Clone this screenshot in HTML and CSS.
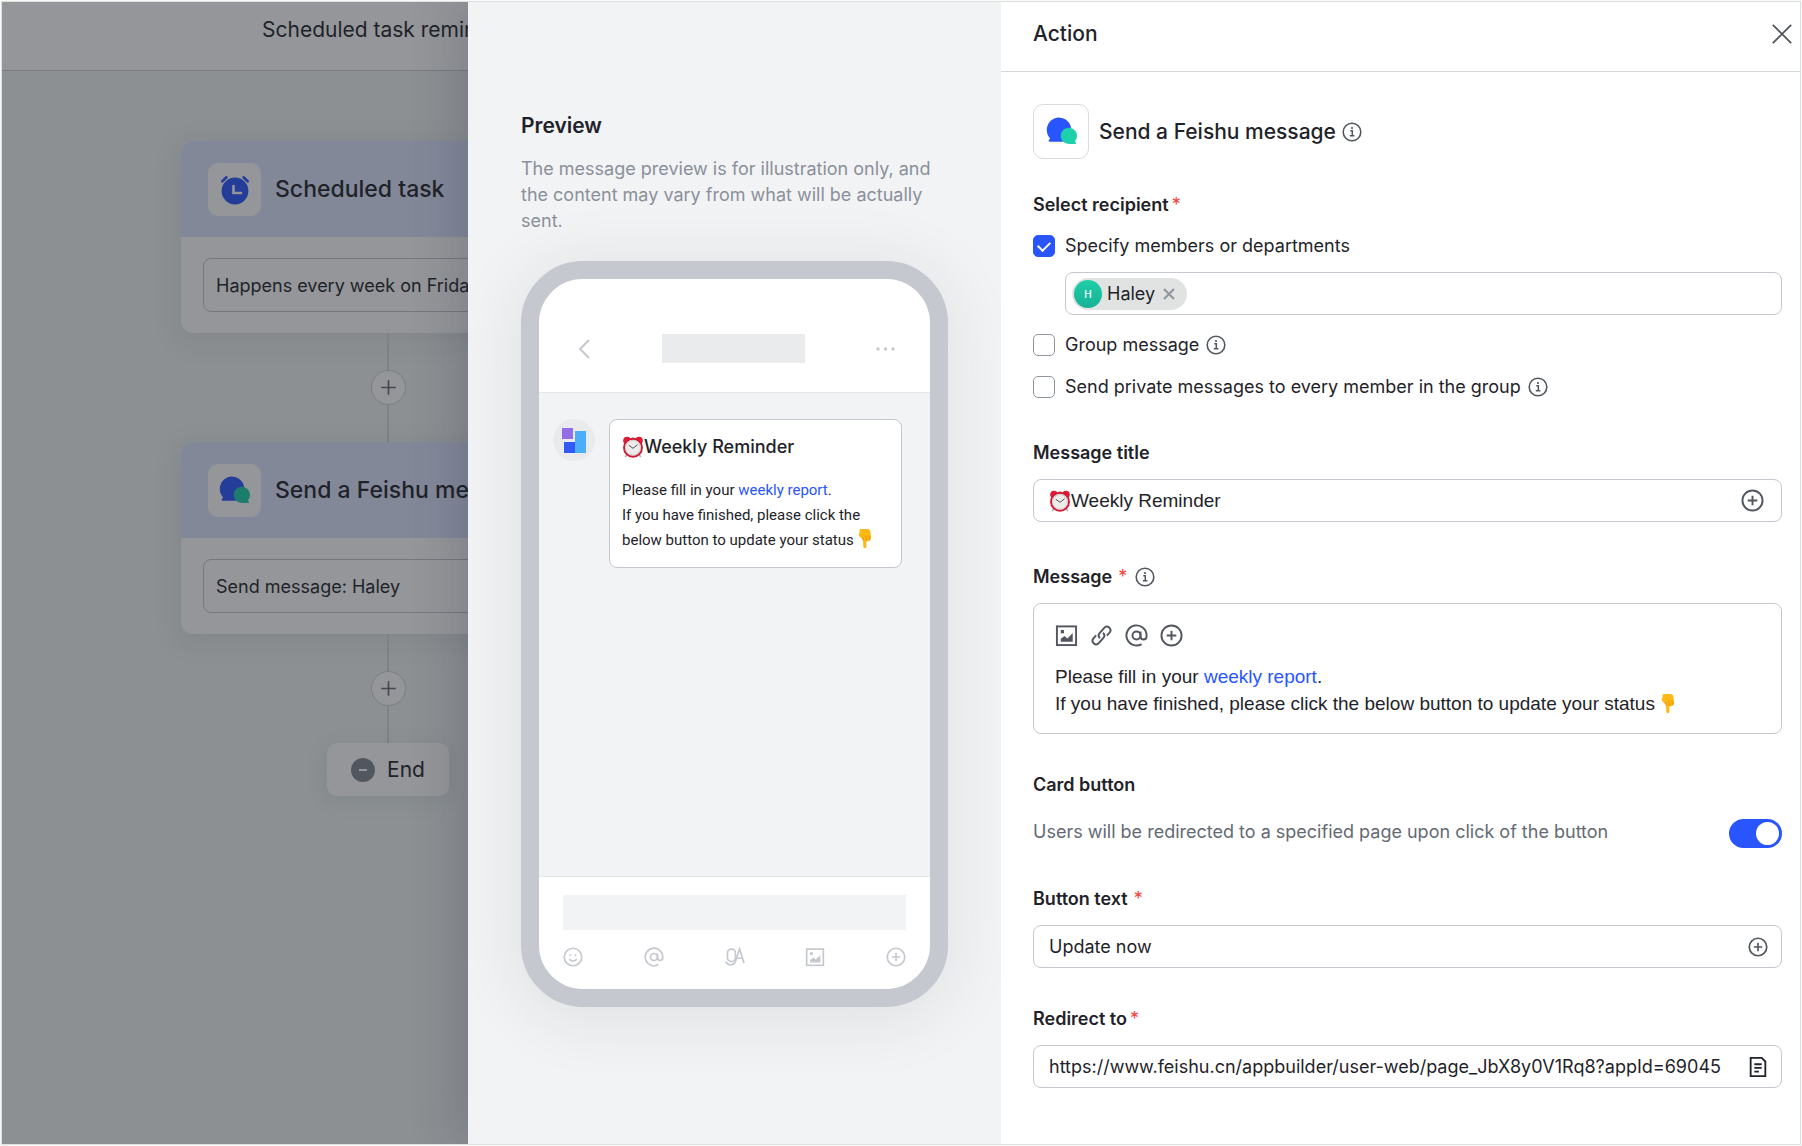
FILE: index.html
```html
<!DOCTYPE html>
<html lang="en">
<head>
<meta charset="utf-8">
<meta name="viewport" content="width=device-width, initial-scale=1">
<title>Scheduled task reminder</title>
<link rel="stylesheet" href="styles.css">
</head>
<body>
<svg class="sprite" aria-hidden="true">
  <symbol id="i-plus" viewBox="0 0 34 34"><path d="M17 9.500v15M9.500 17h15" stroke-width="1.700"/></symbol>
  <symbol id="i-plus-circle" viewBox="0 0 24 24"><circle cx="12" cy="12" r="10.500"/><path d="M12 7v10M7 12h10"/></symbol>
  <symbol id="i-info" viewBox="0 0 20 20"><circle cx="10" cy="10" r="8.800" stroke-width="1.600"/><path d="M8.300 8.800H10.300V13.800M7.800 13.800h4.600" stroke-width="1.500"/><circle cx="10" cy="6" r="1.100" fill="currentColor" stroke="none"/></symbol>
  <symbol id="i-close" viewBox="0 0 24 24"><path d="M2 2l20 20M22 2L2 22"/></symbol>
  <symbol id="i-at" viewBox="0 0 24 24"><circle cx="12" cy="12" r="4.200"/><path d="M16.200 7.800v5.200a3.100 3.100 0 0 0 6.300 0v-1a10.500 10.500 0 1 0-5.200 9"/></symbol>
  <symbol id="i-image" viewBox="0 0 24 24"><rect x="2" y="2.500" width="20" height="19.500"/><path d="M6 18.500v-3l4-3 3 2.500 5.500-5.500v9z" fill="currentColor" stroke="none"/><rect x="6" y="6.300" width="3.400" height="3.400" fill="currentColor" stroke="none"/></symbol>
  <symbol id="i-link" viewBox="0 0 24 24"><path d="M10.400 14.800c-1.700-1.500-1.800-3.600-.4-5.300l4.600-5.300c1.500-1.700 3.800-1.900 5.400-.5 1.700 1.500 1.800 3.600.4 5.300l-2.800 3.200M13.600 9.200c1.700 1.500 1.800 3.600.4 5.300l-4.600 5.300c-1.500 1.700-3.800 1.900-5.400.5-1.700-1.500-1.800-3.600-.4-5.300l2.800-3.200"/></symbol>
  <symbol id="i-smile" viewBox="0 0 24 24"><circle cx="12" cy="12" r="10.500"/><path d="M9 8.600v2.600M15 8.600v2.600M7.500 14.500c2 3 7 3 9 0"/></symbol>
  <symbol id="i-voice" viewBox="0 0 24 24"><rect x="3" y="2.500" width="9.500" height="15" rx="4.600"/><path d="M1 17.500c2 5 9.500 5 11.500 0L17.500 2.500l5.300 17M14.500 13.500h6"/></symbol>
  <symbol id="i-doc" viewBox="0 0 20 24"><path d="M2 2h12l4 4v16H2zM6 9h8M6 13h8M6 17h5"/></symbol>
  <symbol id="i-chat" viewBox="0 0 53 53"><path d="M14.800 36.700c-1 0-1.500-.9-.9-1.700l1.200-1.600A12.300 12.300 0 1 1 36.300 24.500c0 5-3 12.200-9 12.200z" fill="#2955ff"/><path d="M39.800 39H34a8.100 8.100 0 1 1 6-2.800l.8 1.200c.5.800 0 1.600-1 1.600z" fill="#1bd0ab"/></symbol>
  <symbol id="i-clock" viewBox="0 0 53 53"><circle cx="27" cy="28" r="13.400" fill="#2955ff"/><path d="M14.300 18.300l4.200-4M39.700 18.300l-4.200-4" stroke="#2955ff" stroke-width="2.600" stroke-linecap="round"/><path d="M25.500 23v7H33" stroke="#fff" stroke-width="2.600" stroke-linecap="round"/></symbol>
  <symbol id="e-alarm" viewBox="0 0 22 22"><path d="M5 18.500L3.200 21M17 18.500l1.800 2.500" stroke="#aaa" stroke-width="1.400"/><circle cx="5" cy="4.500" r="3.800" fill="#df1b36"/><circle cx="17" cy="4.500" r="3.800" fill="#df1b36"/><path d="M9.500 1.500h3v2h-3z" fill="#999"/><circle cx="11" cy="11.800" r="9" fill="#e3e3e3" stroke="#d11a34" stroke-width="1.900"/><circle cx="11" cy="11.800" r="7.400" fill="#ececea" stroke="#bbb" stroke-width=".6"/><path d="M6.800 9.300l4.200 3 4.600-3.600" stroke="#555" stroke-width="1"/></symbol>
  <symbol id="e-down" viewBox="0 0 16 22"><path d="M3 .8h8c2 0 3 1.200 3.300 3l.7 5.700c.3 2.200-.6 3.800-2.300 3.800-1 .9-2 1-2.700.4v5.800c0 2.400-3.200 2.400-3.300 0l-.2-7L2.800 8.800C1 7 2.100 5.300 2.700 4.500z" fill="#fdb913"/><path d="M8.200 8.500c1.200-.4 1.800.2 1.800 1.300v3.700M12.400 7.800c.8.900 1 3 .6 5.200M6.500 9.500v4" stroke="#e58a06" stroke-width=".8"/></symbol>
</svg>

<div class="app">
  <section class="flow" aria-label="Workflow">
    <header class="flow-header">Scheduled task reminder</header>
    <div class="flow-canvas">
      <article class="node">
        <h2 class="node-head"><span class="node-icon"><svg class="tile"><use href="#i-clock"/></svg></span>Scheduled task</h2>
        <div class="node-body"><p class="node-field">Happens every week on Friday</p></div>
      </article>
      <span class="wire"></span>
      <button class="add" aria-label="Add step"><svg class="icon"><use href="#i-plus"/></svg></button>
      <span class="wire"></span>
      <article class="node">
        <h2 class="node-head"><span class="node-icon"><svg class="tile"><use href="#i-chat"/></svg></span>Send a Feishu message</h2>
        <div class="node-body"><p class="node-field">Send message: Haley</p></div>
      </article>
      <span class="wire"></span>
      <button class="add" aria-label="Add step"><svg class="icon"><use href="#i-plus"/></svg></button>
      <span class="wire"></span>
      <div class="end"><span class="end-dot"></span>End</div>
    </div>
    <div class="mask"></div>
  </section>

  <section class="preview">
    <h2 class="preview-title">Preview</h2>
    <p class="preview-note">The message preview is for illustration only, and the content may vary from what will be actually sent.</p>
    <div class="phone">
      <div class="phone-head">
        <svg class="phone-back" viewBox="0 0 12 20"><path d="M11 1L2 10l9 9"/></svg>
        <span class="phone-name"></span>
        <svg class="phone-more" viewBox="0 0 20 4"><circle cx="2" cy="2" r="1.700"/><circle cx="9.500" cy="2" r="1.700"/><circle cx="17" cy="2" r="1.700"/></svg>
      </div>
      <div class="phone-chat">
        <svg class="bot" viewBox="0 0 42 42"><circle cx="21" cy="21" r="21" fill="#e9eaec"/><path d="M9 9h11v11H9z" fill="#936ee8"/><path d="M11 23h11v11H11z" fill="#3259f5"/><path d="M22 12h11v22H22z" fill="#4aaef8"/></svg>
        <div class="bubble">
          <h3 class="bubble-title"><svg class="emoji"><use href="#e-alarm"/></svg>Weekly Reminder</h3>
          <p class="bubble-text">Please fill in your <a href="#report">weekly report</a>.<br>If you have finished, please click the<br>below button to update your status <svg class="hand"><use href="#e-down"/></svg></p>
        </div>
      </div>
      <div class="phone-foot">
        <span class="phone-input"></span>
        <div class="phone-tools">
          <svg class="icon"><use href="#i-smile"/></svg>
          <svg class="icon"><use href="#i-at"/></svg>
          <svg class="icon"><use href="#i-voice"/></svg>
          <svg class="icon"><use href="#i-image"/></svg>
          <svg class="icon"><use href="#i-plus-circle"/></svg>
        </div>
      </div>
    </div>
  </section>

  <section class="action">
    <header class="action-head">
      <h1 class="action-title">Action</h1>
      <button class="plain close" aria-label="Close"><svg class="icon"><use href="#i-close"/></svg></button>
    </header>
    <form class="form">
      <div class="kind">
        <span class="kind-icon"><svg class="tile"><use href="#i-chat"/></svg></span>
        <h2 class="kind-title">Send a Feishu message</h2>
        <svg class="icon info"><use href="#i-info"/></svg>
      </div>

      <h3 class="label label-first">Select recipient<span class="req tight">*</span></h3>
      <label class="check"><input type="checkbox" class="box" checked>Specify members or departments</label>
      <div class="field members">
        <span class="tag"><span class="avatar">H</span>Haley<button type="button" class="plain tag-x" aria-label="Remove Haley"><svg class="icon"><use href="#i-close"/></svg></button></span>
        <input class="input" type="text" aria-label="Members or departments">
      </div>
      <label class="check"><input type="checkbox" class="box">Group message<svg class="icon info"><use href="#i-info"/></svg></label>
      <label class="check"><input type="checkbox" class="box">Send private messages to every member in the group<svg class="icon info"><use href="#i-info"/></svg></label>

      <label class="label wide" for="title">Message title</label>
      <div class="field">
        <svg class="emoji"><use href="#e-alarm"/></svg>
        <input class="input arial" id="title" type="text" value="Weekly Reminder">
        <button type="button" class="plain insert" aria-label="Insert"><svg class="icon"><use href="#i-plus-circle"/></svg></button>
      </div>

      <h3 class="label wide" id="message-label">Message<span class="req">*</span><svg class="icon info"><use href="#i-info"/></svg></h3>
      <div class="editor">
        <div class="toolbar">
          <button type="button" class="plain" aria-label="Image"><svg class="icon"><use href="#i-image"/></svg></button>
          <button type="button" class="plain" aria-label="Link"><svg class="icon"><use href="#i-link"/></svg></button>
          <button type="button" class="plain" aria-label="Mention"><svg class="icon"><use href="#i-at"/></svg></button>
          <button type="button" class="plain" aria-label="Insert"><svg class="icon"><use href="#i-plus-circle"/></svg></button>
        </div>
        <div class="editor-text arial" contenteditable="true" role="textbox" aria-multiline="true" aria-labelledby="message-label">Please fill in your <a href="#report">weekly report</a>.<br>If you have finished, please click the below button to update your status <svg class="hand"><use href="#e-down"/></svg></div>
      </div>

      <label class="label" for="card-button">Card button</label>
      <div class="switch-row">
        <p class="hint">Users will be redirected to a specified page upon click of the button</p>
        <input type="checkbox" role="switch" class="switch" id="card-button" checked>
      </div>

      <label class="label" for="text">Button text<span class="req">*</span></label>
      <div class="field">
        <input class="input" id="text" type="text" value="Update now">
        <button type="button" class="plain pick" aria-label="Insert"><svg class="icon"><use href="#i-plus-circle"/></svg></button>
      </div>

      <label class="label" for="url">Redirect to<span class="req tight">*</span></label>
      <div class="field">
        <input class="input" id="url" type="text" value="https://www.feishu.cn/appbuilder/user-web/page_JbX8y0V1Rq8?appId=69045">
        <button type="button" class="plain pick doc" aria-label="Choose page"><svg class="icon"><use href="#i-doc"/></svg></button>
      </div>
    </form>
  </section>
</div>
</body>
</html>
```
FILE: styles.css
```css
* { box-sizing: border-box; margin: 0; }

body {
  padding: 1px;
  background: #f8faf9;
  color: #1f2329;
  font: 400 18px/26px Inter, "Liberation Sans", sans-serif;
}

a { color: #2955ff; text-decoration: none; }
button, input { font: inherit; color: inherit; }
h1, h2, h3 { font-weight: 500; }

.sprite { position: absolute; width: 0; height: 0; }
svg { fill: none; stroke-width: 2; flex: none; }
.icon { stroke: currentColor; display: block; }
.tile { width: 53px; height: 53px; display: block; }
.plain { border: 0; padding: 0; background: none; color: #51565f; cursor: pointer; }

.app {
  display: grid;
  grid-template-columns: 466fr 533fr 799fr;
  min-height: calc(100vh - 2px);
  border: 1px solid #dfe1e1;
  overflow: hidden;
}

/* Workflow behind the drawer */
.flow {
  position: relative;
  display: flex;
  flex-direction: column;
  min-width: 0;
  overflow: hidden;
  background: #eff3f3;
}
.flow-header {
  height: 69px;
  padding: 15px 0 0 260px;
  border-bottom: 1px solid #c9cdd0;
  background: #fff;
  font-size: 21px;
  white-space: nowrap;
}
.flow-canvas {
  display: flex;
  flex-direction: column;
  align-items: center;
  width: 414px;
  margin: 70px 0 0 179px;
}
.node {
  width: 100%;
  border-radius: 12px;
  overflow: hidden;
  background: #fff;
  box-shadow: 0 6px 24px 8px rgba(31, 35, 41, .06);
}
.node-head {
  display: flex;
  align-items: center;
  gap: 14px;
  height: 96px;
  padding: 0 27px;
  background: #dee5ff;
  font-size: 23px;
  white-space: nowrap;
}
.node-icon { border-radius: 10px; background: #fff; }
.node-body { padding: 21px 22px; }
.node-field {
  height: 54px;
  padding: 0 12px;
  border: 1px solid #c3c6cb;
  border-radius: 8px;
  line-height: 53px;
  white-space: nowrap;
}
.wire { width: 2px; height: 37px; background: #d5d7da; }
.add {
  width: 35px;
  height: 35px;
  padding: 0;
  border: 1px solid #ced1d5;
  border-radius: 50%;
  background: #fff;
  color: #646a73;
}
.add .icon { width: 33px; height: 33px; }
.end {
  display: flex;
  align-items: center;
  justify-content: center;
  gap: 12px;
  width: 122px;
  height: 53px;
  border-radius: 10px;
  background: #fff;
  box-shadow: 0 4px 20px 4px rgba(31, 35, 41, .06);
  font-size: 21px;
}
.end-dot {
  display: grid;
  place-items: center;
  width: 24px;
  height: 24px;
  border-radius: 50%;
  background: #80858f;
}
.end-dot::before { content: ""; width: 8px; height: 2px; background: #fff; }
.mask { position: absolute; inset: 0; background: rgba(31, 35, 41, .48); }

/* Message preview */
.preview {
  z-index: 1;
  padding: 111px 53px 0;
  background: #f2f3f5;
  box-shadow: -8px 0 48px rgba(31, 35, 60, .2);
}
.preview-title { font-size: 21px; font-weight: 600; }
.preview-note { margin: 17px 0 27px; color: #8a9099; }
.phone {
  display: flex;
  flex-direction: column;
  height: 746px;
  border: 18px solid #c5c8ce;
  border-radius: 62px;
  overflow: hidden;
  background: #f2f3f5;
  box-shadow: 0 8px 64px 8px rgba(31, 35, 41, .08);
}
.phone-head {
  display: flex;
  align-items: center;
  justify-content: space-between;
  height: 114px;
  padding: 26px 34px 0 39px;
  border-bottom: 1px solid #e4e6e8;
  background: #fff;
}
.phone-back { width: 12px; height: 20px; stroke: #c5c8ce; }
.phone-more { width: 20px; height: 4px; fill: #c5c8ce; }
.phone-name { width: 143px; height: 29px; background: #eaebed; }
.phone-chat { flex: 1; display: flex; align-items: flex-start; gap: 14px; padding: 26px 28px 0 14px; }
.bot { width: 42px; height: 42px; }
.bubble {
  flex: 1;
  padding: 14px 12px 14px;
  border: 1px solid #c5c8ce;
  border-radius: 8px;
  background: #fff;
}
.bubble-title { display: flex; align-items: center; margin-bottom: 18px; font-size: 18px; }
.bubble-text { font-family: Roboto, "Liberation Sans", sans-serif; font-size: 15px; line-height: 25px; }
.emoji { width: 22px; height: 22px; }
.hand { width: 15px; height: 21px; vertical-align: -4px; }
.phone-foot { padding: 18px 24px 22px; border-top: 1px solid #e4e6e8; background: #fff; }
.phone-input { display: block; height: 35px; margin-bottom: 17px; background: #f2f3f5; }
.phone-tools { display: flex; justify-content: space-between; color: #c5c8ce; }
.phone-tools .icon { width: 20px; height: 20px; }

/* Action settings */
.action { z-index: 2; min-width: 0; background: #fff; }
.action-head {
  display: flex;
  align-items: center;
  justify-content: space-between;
  height: 70px;
  padding: 0 7px 6px 32px;
  border-bottom: 1px solid #d4d6d9;
}
.action-title { font-size: 21px; }
.close .icon { width: 22px; height: 22px; }
.form { padding: 32px 18px 48px 32px; }
.kind { display: flex; align-items: center; gap: 10px; height: 55px; }
.kind-icon {
  display: grid;
  place-items: center;
  width: 56px;
  height: 55px;
  border: 1px solid #d8dbdf;
  border-radius: 10px;
}
.kind-title { font-size: 21px; }
.info { width: 20px; height: 20px; color: #51565f; }
.kind .info { margin-left: -4px; }
.check .info { margin-left: -3px; }
.label { display: flex; align-items: center; height: 28px; margin: 37px 0 12px; font-size: 18px; font-weight: 600; }
.label.wide { margin-top: 41px; }
.label.label-first { margin: 32px 0 16px; }
.req { margin: 0 8px 0 6px; color: #f5413d; font-weight: 400; }
.req.tight { margin-left: 3px; }
.check { display: flex; align-items: center; gap: 10px; height: 22px; margin-top: 20px; }
.label-first + .check { margin-top: 0; }
.box {
  display: grid;
  place-items: center;
  width: 22px;
  height: 22px;
  margin: 0;
  border: 1px solid #8f959e;
  border-radius: 5px;
  appearance: none;
}
.box:checked { border-color: #2955ff; background: #2955ff; }
.box:checked::before {
  content: "";
  width: 10px;
  height: 6px;
  margin-bottom: 3px;
  border: solid #fff;
  border-width: 0 0 2px 2px;
  rotate: -45deg;
}
.field {
  display: flex;
  align-items: center;
  height: 43px;
  padding: 0 15px;
  border: 1px solid #c5c8ce;
  border-radius: 8px;
}
.field.members { margin: 15px 0 -1px 32px; padding: 0 6px; }
.input { flex: 1; min-width: 0; padding: 0; border: 0; outline: 0; background: none; }
.arial { font-family: "Liberation Sans", Arial, sans-serif; font-size: 19px; }
.tag {
  display: flex;
  align-items: center;
  height: 32px;
  padding: 0 12px 0 2px;
  border-radius: 16px;
  background: #e1e3e2;
}
.avatar {
  display: grid;
  place-items: center;
  width: 28px;
  height: 28px;
  margin-right: 5px;
  border-radius: 50%;
  background: linear-gradient(#1fcfa8, #16b195);
  color: #fff;
  font-size: 10px;
  font-weight: 500;
}
.tag-x { margin-left: 8px; color: #8f959e; }
.tag-x .icon { width: 12px; height: 12px; stroke-width: 4; }
.insert .icon { width: 23px; height: 23px; }
.insert { margin-right: 2px; }
.pick .icon { width: 20px; height: 20px; }
.pick { margin-right: -2px; }
.pick.doc { color: #1f2329; }
.doc .icon { height: 22px; }
.editor { padding: 20px 21px 16px; border: 1px solid #c5c8ce; border-radius: 8px; }
.toolbar { display: flex; gap: 12px; margin-bottom: 16px; }
.toolbar .icon { width: 23px; height: 23px; }
.editor-text { line-height: 27px; outline: 0; }
.switch-row { display: flex; justify-content: space-between; margin-top: 20px; }
.hint { color: #646a73; }
.switch {
  width: 53px;
  height: 29px;
  margin: 0;
  padding: 3px;
  border-radius: 15px;
  background: #c5c8ce;
  appearance: none;
}
.switch::before { content: ""; display: block; width: 23px; height: 23px; border-radius: 50%; background: #fff; }
.switch:checked { background: #2955ff; }
.switch:checked::before { margin-left: auto; }
```
